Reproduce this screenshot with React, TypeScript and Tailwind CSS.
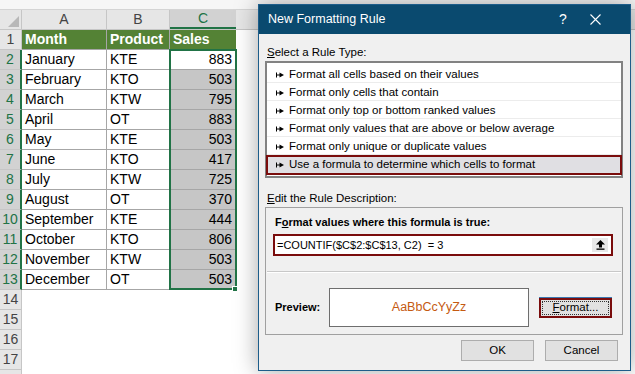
import React from 'react';

const data: [string, string, number][] = [
  ['January', 'KTE', 883],
  ['February', 'KTO', 503],
  ['March', 'KTW', 795],
  ['April', 'OT', 883],
  ['May', 'KTE', 503],
  ['June', 'KTO', 417],
  ['July', 'KTW', 725],
  ['August', 'OT', 370],
  ['September', 'KTE', 444],
  ['October', 'KTO', 806],
  ['November', 'KTW', 503],
  ['December', 'OT', 503],
];

const ruleTypes = [
  'Format all cells based on their values',
  'Format only cells that contain',
  'Format only top or bottom ranked values',
  'Format only values that are above or below average',
  'Format only unique or duplicate values',
];

const cellFont = { fontFamily: '"Liberation Sans", Arial, sans-serif' };

// small arrow glyph used in the rule list
const RuleArrow = () => (
  <svg width="8" height="6" viewBox="0 0 8 6" className="shrink-0">
    <rect x="0" y="0.5" width="1" height="5" fill="#000" />
    <rect x="0" y="2.5" width="4" height="1" fill="#000" />
    <polygon points="3.5,0.5 8,3 3.5,5.5" fill="#000" />
  </svg>
);

const RowHead = ({ n, selected }: { n?: number; selected?: boolean }) => (
  <div
    className={
      'w-[22px] h-[20px] shrink-0 flex items-center justify-center border-b border-[#c6c6c6] ' +
      (selected
        ? 'bg-[#d2d2d2] text-[#217346] border-r-2 border-r-[#217346]'
        : 'bg-[#e6e6e6] text-[#444] border-r border-r-[#c6c6c6]')
    }
  >
    {n}
  </div>
);

const Sheet = () => (
  <div className="absolute inset-0 bg-white text-[14px] text-black" style={cellFont}>
    {/* ribbon remnant */}
    <div className="h-[10px] bg-[#f6f6f6] border-b border-[#d4d4d4]" />
    {/* column headers */}
    <div className="flex h-[20px] bg-[#e6e6e6] border-b border-[#c6c6c6] text-[#444]">
      <div className="w-[22px] shrink-0 border-r border-[#c6c6c6] flex items-end justify-end p-[2px]">
        <svg width="11" height="11" viewBox="0 0 11 11">
          <polygon points="11,0 11,11 0,11" fill="#b8b8b8" />
        </svg>
      </div>
      <div className="w-[85px] shrink-0 border-r border-[#c6c6c6] flex items-center justify-center">A</div>
      <div className="w-[63px] shrink-0 border-r border-[#c6c6c6] flex items-center justify-center">B</div>
      <div className="w-[66px] shrink-0 bg-[#d2d2d2] text-[#217346] border-b-2 border-[#217346] flex items-center justify-center">C</div>
      <div className="flex-1" />
    </div>
    {/* header row */}
    <div className="flex">
      <RowHead n={1} />
      <div className="w-[85px] h-[20px] shrink-0 bg-[#548235] text-white font-bold pl-[3px] flex items-center border-r border-b border-[#a6a6a6]">Month</div>
      <div className="w-[63px] h-[20px] shrink-0 bg-[#548235] text-white font-bold pl-[3px] flex items-center border-r border-b border-[#a6a6a6]">Product</div>
      <div className="w-[66px] h-[20px] shrink-0 bg-[#548235] text-white font-bold pl-[3px] flex items-center border-b border-[#a6a6a6]">Sales</div>
    </div>
    {/* data rows */}
    <div className="relative">
      {data.map(([m, p, s], i) => (
        <div key={m} className="flex">
          <RowHead n={i + 2} selected />
          <div className="w-[85px] h-[20px] shrink-0 pl-[3px] flex items-center border-r border-b border-[#a6a6a6]">{m}</div>
          <div className="w-[63px] h-[20px] shrink-0 pl-[3px] flex items-center border-r border-b border-[#a6a6a6]">{p}</div>
          <div
            className={
              'w-[66px] h-[20px] shrink-0 pr-[4px] flex items-center justify-end border-b border-[#a6a6a6] ' +
              (i === 0 ? 'bg-white' : 'bg-[#c6c6c6]')
            }
          >
            {s}
          </div>
        </div>
      ))}
      {/* selection outline C2:C13 */}
      <div className="absolute left-[169px] top-[-1px] w-[68px] h-[241px] border-2 border-[#217346] pointer-events-none" />
      <div className="absolute left-[232px] top-[236px] w-[6px] h-[6px] bg-[#217346] border border-white" />
    </div>
    {[14, 15, 16, 17].map((n) => (
      <div key={n} className="flex">
        <RowHead n={n} />
      </div>
    ))}
    <div className="flex">
      <RowHead />
    </div>
  </div>
);

const Dialog = () => (
  <div
    className="absolute left-[258px] top-[4px] w-[373px] h-[367px] bg-[#f0f0f0] border border-[#1d5d8a] shadow-[0_0_22px_rgba(0,0,0,0.35)] text-[11.5px] text-black flex flex-col"
    style={cellFont}
  >
    {/* title bar */}
    <div className="h-[29px] shrink-0 bg-[#0a4a6f] text-white flex items-center pl-[9px]">
      <span className="text-[12.5px] flex-1">New Formatting Rule</span>
      <span className="text-[14px] w-[20px] text-center">?</span>
      <span className="w-[45px] flex justify-center mr-[12px]">
        <svg width="11" height="11" viewBox="0 0 11 11">
          <path d="M0.5 0.5 L10.5 10.5 M10.5 0.5 L0.5 10.5" stroke="#fff" strokeWidth="1.1" />
        </svg>
      </span>
    </div>

    <div className="flex-1 pl-[6px] pr-[7px] flex flex-col">
      <div className="mt-[10px] h-[16px] leading-[16px] pl-[2px]">
        <span className="underline">S</span>elect a Rule Type:
      </div>
      <div className="mt-[1px] h-[117px] border-2 border-[#828282] bg-white flex flex-col pt-[2px]">
        {ruleTypes.map((t) => (
          <div key={t} className="h-[18px] shrink-0 flex items-center gap-[5px] pl-[9px] border-b border-[#ececec] pt-[2px]">
            <RuleArrow />
            <span>{t}</span>
          </div>
        ))}
        <div className="h-[20px] shrink-0 flex items-center gap-[5px] pl-[8px] bg-[#e0dfe3] border-2 border-[#7a0c0c] -mx-[1px]">
          <RuleArrow />
          <span>Use a formula to determine which cells to format</span>
        </div>
      </div>

      <div className="mt-[12px] h-[16px] leading-[16px] pl-[2px]">
        <span className="underline">E</span>dit the Rule Description:
      </div>
      <div className="mt-[1px] h-[128px] border border-[#a0a0a0] flex flex-col">
        <div className="mt-[6px] h-[16px] leading-[16px] pl-[9px] font-bold text-[11px]">
          F<span className="underline">o</span>rmat values where this formula is true:
        </div>
        <div className="mt-[4px] ml-[7px] mr-[9px] h-[22px] border-2 border-[#7a0c0c] bg-white flex items-center pl-[2px] pr-[3px]">
          <span className="flex-1 text-[11px] whitespace-pre">=COUNTIF($C$2:$C$13, C2)  = 3</span>
          <div className="w-[16px] h-[14px] bg-[#e8e8e8] flex items-center justify-center">
            <svg width="9" height="10" viewBox="0 0 9 10">
              <polygon points="4.5,0 9,4.5 6,4.5 6,7.5 3,7.5 3,4.5 0,4.5" fill="#000" />
              <rect x="0.5" y="8.5" width="8" height="1.3" fill="#000" />
            </svg>
          </div>
        </div>
        <div className="mt-[15px] mx-[1px] border-t border-[#c8c8c8] border-b border-b-white" />
        <div className="mt-[15px] flex items-center pl-[9px]">
          <span className="w-[54px] font-bold text-[11px]">Preview:</span>
          <div className="w-[200px] h-[39px] bg-white border border-[#6e6e6e] flex items-center justify-center text-[#c55a11] text-[12.5px]">
            AaBbCcYyZz
          </div>
          <div className="ml-[10px] w-[73px] h-[20px] border-2 border-[#7a0c0c] shadow-[0_-1px_0_#3a78b0] bg-[#e1e1e1] p-[1px]">
            <div className="w-full h-full border border-dotted border-[#333] flex items-center justify-center">
              <span>
                <span className="underline">F</span>ormat...
              </span>
            </div>
          </div>
        </div>
      </div>

      <div className="mt-[5px] flex justify-end gap-[11px] pr-[5px]">
        <div className="w-[73px] h-[21px] bg-[#e1e1e1] border border-[#adadad] flex items-center justify-center">OK</div>
        <div className="w-[73px] h-[21px] bg-[#e1e1e1] border border-[#adadad] flex items-center justify-center">Cancel</div>
      </div>
    </div>
  </div>
);

export default function App() {
  return (
    <div className="relative w-[635px] h-[374px] overflow-hidden bg-[#e6e6e6]">
      <Sheet />
      <Dialog />
    </div>
  );
}
